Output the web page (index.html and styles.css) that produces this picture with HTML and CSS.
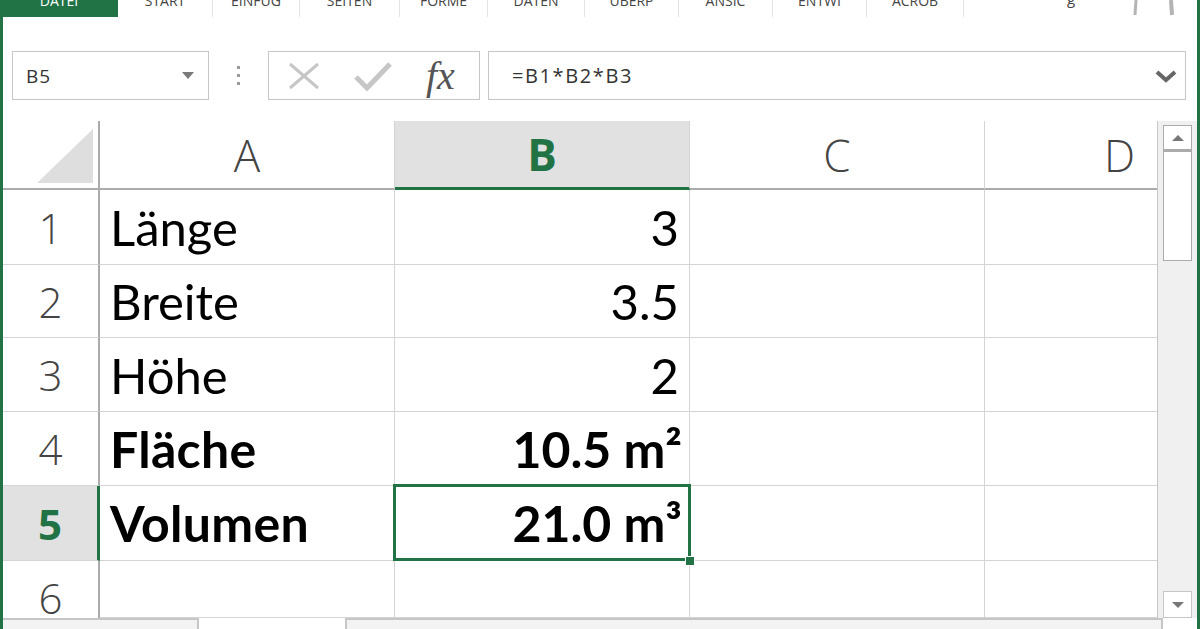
FILE: index.html
```html
<!DOCTYPE html>
<html lang="de">
<head>
    <meta charset="UTF-8">
    <title>Volumen</title>
    <link rel="stylesheet" href="styles.css">
</head>
<body>

<div class="app">
    <div class="tabs">
        <div class="tab file"><span>DATEI</span></div>
        <div class="tab"><span>START</span></div>
        <div class="tab"><span>EINFÜG</span></div>
        <div class="tab"><span>SEITEN</span></div>
        <div class="tab"><span>FORME</span></div>
        <div class="tab"><span>DATEN</span></div>
        <div class="tab"><span>ÜBERP</span></div>
        <div class="tab"><span>ANSIC</span></div>
        <div class="tab"><span>ENTWI</span></div>
        <div class="tab"><span>ACROB</span></div>
        <div class="tabs-rest">
            <span class="account">g</span>
            <svg class="avatar" width="44" height="16" viewBox="0 0 44 16">
                <path d="M3 0 L2 15" stroke="#b4b4b4" stroke-width="3"/>
                <path d="M38 0 L39 15" stroke="#b4b4b4" stroke-width="4"/>
            </svg>
        </div>
    </div>

    <div class="formula-bar">
        <div class="name-box">
            <span>B5</span>
            <svg width="12" height="7" viewBox="0 0 12 7"><path d="M0 0h12L6 7z" fill="#7a7a7a"/></svg>
        </div>
        <div class="grip">
            <svg width="4" height="20" viewBox="0 0 4 20">
                <rect x="0" y="0" width="3" height="3" fill="#9a9a9a"/>
                <rect x="0" y="8" width="3" height="3" fill="#9a9a9a"/>
                <rect x="0" y="16" width="3" height="3" fill="#9a9a9a"/>
            </svg>
        </div>
        <div class="fx-box">
            <svg class="cancel" width="32" height="28" viewBox="0 0 32 28">
                <path d="M2 2 L30 26 M30 2 L2 26" stroke="#c6c6c6" stroke-width="3" fill="none"/>
            </svg>
            <svg class="enter" width="38" height="30" viewBox="0 0 38 30">
                <path d="M2 16 L13 27 L36 3" stroke="#c6c6c6" stroke-width="5" fill="none"/>
            </svg>
            <i class="fx">fx</i>
        </div>
        <div class="formula-box">
            <span>=B1*B2*B3</span>
            <svg width="22" height="14" viewBox="0 0 22 14"><path d="M2 3 L11 11 L20 3" stroke="#666" stroke-width="4" fill="none"/></svg>
        </div>
    </div>

    <div class="sheet">
        <div class="grid">
            <div class="corner">
                <svg width="56" height="54" viewBox="0 0 56 54"><path d="M0 54 L56 54 L56 0 z" fill="#dedede"/></svg>
            </div>
            <div class="ch">A</div>
            <div class="ch sel">B</div>
            <div class="ch">C</div>
            <div class="ch">D</div>

            <div class="rh">1</div>
            <div class="c">Länge</div>
            <div class="c num">3</div>
            <div class="c"></div>
            <div class="c"></div>

            <div class="rh">2</div>
            <div class="c">Breite</div>
            <div class="c num">3.5</div>
            <div class="c"></div>
            <div class="c"></div>

            <div class="rh">3</div>
            <div class="c">Höhe</div>
            <div class="c num">2</div>
            <div class="c"></div>
            <div class="c"></div>

            <div class="rh">4</div>
            <div class="c b">Fläche</div>
            <div class="c num b">10.5 m²</div>
            <div class="c"></div>
            <div class="c"></div>

            <div class="rh sel">5</div>
            <div class="c b">Volumen</div>
            <div class="c num b active">21.0 m³</div>
            <div class="c"></div>
            <div class="c"></div>

            <div class="rh cut">6</div>
            <div class="c"></div>
            <div class="c"></div>
            <div class="c"></div>
            <div class="c"></div>
        </div>
        <div class="vscroll">
            <div class="sbtn up"><svg width="12" height="6" viewBox="0 0 12 6"><path d="M0 6h12L6 0z" fill="#777"/></svg></div>
            <div class="thumb"></div>
            <div class="track"></div>
            <div class="sbtn down"><svg width="12" height="6" viewBox="0 0 12 6"><path d="M0 0h12L6 6z" fill="#777"/></svg></div>
        </div>
    </div>

    <div class="status">
        <div class="sheet-nav"></div>
        <div class="hscroll"></div>
    </div>
</div>

</body>
</html>
```

FILE: styles.css
```css
body{ margin: 0; padding: 0; background: #fff;}
svg{ display: block;}
/* reset */

.app{
    width: 1200px;
    height: 629px;
    box-sizing: border-box;
    border-left: 3px solid #217346;
    border-right: 3px solid #217346;
    overflow: hidden;
    font-family: "Open Sans", "Liberation Sans", sans-serif;
}

/* ribbon tabs, mostly scrolled out of view */
.tabs{
    display: flex;
    height: 17px;
    margin-left: -3px;
}
.tab{
    width: 93px;
    border-right: 1px solid #e3e3e3;
    overflow: hidden;
    font-size: 14px;
    line-height: 14px;
    color: #444;
    text-align: center;
}
.tab span{
    display: block;
    margin-top: -6px;
}
.tab.file{
    width: 118px;
    background: #217346;
    color: #fff;
    border-right: 0;
}
.tab:nth-child(2){ width: 94px;}
.tab:nth-child(3){ width: 86px;}
.tab:nth-child(4){ width: 99px;}
.tab:nth-child(5){ width: 87px;}
.tab:nth-child(6){ width: 96px;}
.tab:nth-child(10){ width: 96px;}
.tabs-rest{
    flex: 1;
    display: flex;
    overflow: hidden;
}
.account{
    margin-left: 103px;
    margin-top: -12px;
    font-size: 15px;
    color: #444;
}
.avatar{
    margin-left: 58px;
}

/* formula bar */
.formula-bar{
    display: flex;
    align-items: center;
    height: 104px;
    box-sizing: border-box;
    padding: 34px 11px 21px 9px;
}
.name-box, .fx-box, .formula-box{
    height: 49px;
    box-sizing: border-box;
    border: 1px solid #c6c6c6;
    display: flex;
    align-items: center;
}
.name-box{
    width: 197px;
    padding: 0 14px 0 13px;
    justify-content: space-between;
    font-size: 19px;
    letter-spacing: 1px;
    color: #333;
}
.grip{
    width: 59px;
    display: flex;
    justify-content: center;
}
.fx-box{
    width: 212px;
    padding-left: 19px;
}
.fx-box .enter{
    margin-left: 34px;
}
.fx{
    margin-left: 34px;
    font-family: "Liberation Serif", serif;
    font-size: 40px;
    color: #555;
    line-height: 40px;
}
.formula-box{
    flex: 1;
    margin-left: 8px;
    padding: 0 8px 0 23px;
    justify-content: space-between;
    font-size: 20px;
    letter-spacing: 1.6px;
    color: #333;
}

/* sheet */
.sheet{
    display: flex;
    height: 497px;
}
.grid{
    width: 1154px;
    overflow: hidden;
    display: grid;
    grid-template-columns: 97px 295px 295px 295px 270px;
    grid-template-rows: 69px 75px 73px 74px 74px 75px 57px;
}
.corner{
    border-right: 2px solid #ababab;
    border-bottom: 2px solid #ababab;
    display: flex;
    align-items: flex-end;
    justify-content: flex-end;
    padding: 0 5px 5px 0;
}
.ch{
    display: flex;
    align-items: center;
    justify-content: center;
    border-right: 1px solid #d4d4d4;
    border-bottom: 2px solid #ababab;
    font-size: 44px;
    font-weight: 300;
    color: #444;
}
.ch.sel{
    background: #e1e1e1;
    border-bottom: 3px solid #217346;
    color: #217346;
    font-weight: 700;
}
.rh{
    display: flex;
    align-items: center;
    justify-content: center;
    border-right: 2px solid #ababab;
    border-bottom: 1px solid #d4d4d4;
    font-size: 42px;
    font-weight: 300;
    color: #444;
}
.rh.sel{
    background: #e1e1e1;
    border-right: 3px solid #217346;
    color: #217346;
    font-weight: 700;
}
.rh.cut{
    align-items: flex-start;
    padding-top: 8px;
    overflow: hidden;
    border-bottom: 0;
}
.c{
    display: flex;
    align-items: center;
    padding: 0 10px;
    border-right: 1px solid #d4d4d4;
    border-bottom: 1px solid #d4d4d4;
    font-family: Lato, "Liberation Sans", sans-serif;
    font-size: 49px;
    color: #000;
    white-space: nowrap;
}
.c.num{
    justify-content: flex-end;
}
.c.b{
    font-weight: 700;
    font-size: 50px;
    letter-spacing: 0.3px;
}
.c.num.b{
    padding-right: 7px;
    letter-spacing: 0;
}
.c.active{
    position: relative;
}
.c.active::before{
    content: "";
    position: absolute;
    left: -2px;
    right: -2px;
    top: -2px;
    bottom: -1px;
    border: 3px solid #217346;
}
.c.active::after{
    content: "";
    position: absolute;
    right: -6px;
    bottom: -6px;
    width: 8px;
    height: 8px;
    background: #217346;
    border: 1px solid #fff;
    z-index: 2;
}

/* vertical scroll bar */
.vscroll{
    flex: 1;
    display: flex;
    flex-direction: column;
    padding: 4px 5px 0 5px;
    background: #f0f0f0;
    border-left: 1px solid #c6c6c6;
}
.sbtn{
    height: 27px;
    box-sizing: border-box;
    border: 1px solid #ababab;
    background: #fff;
    display: flex;
    align-items: center;
    justify-content: center;
}
.sbtn.up{
    border-bottom: 3px solid #ababab;
}
.thumb{
    height: 109px;
    box-sizing: border-box;
    border: 1px solid #ababab;
    border-top: 0;
    background: #fff;
}
.track{
    flex: 1;
}
.sbtn.down{
    border-color: #c6c6c6;
}

/* bottom bar */
.status{
    display: flex;
    height: 11px;
    background: #fff;
}
.sheet-nav, .hscroll{
    border-top: 2px solid #c6c6c6;
    background: #f3f3f3;
}
.sheet-nav{
    width: 194px;
    border-right: 2px solid #c6c6c6;
}
.hscroll{
    width: 814px;
    margin-left: 146px;
    border-left: 2px solid #c6c6c6;
    border-right: 2px solid #c6c6c6;
}
```
